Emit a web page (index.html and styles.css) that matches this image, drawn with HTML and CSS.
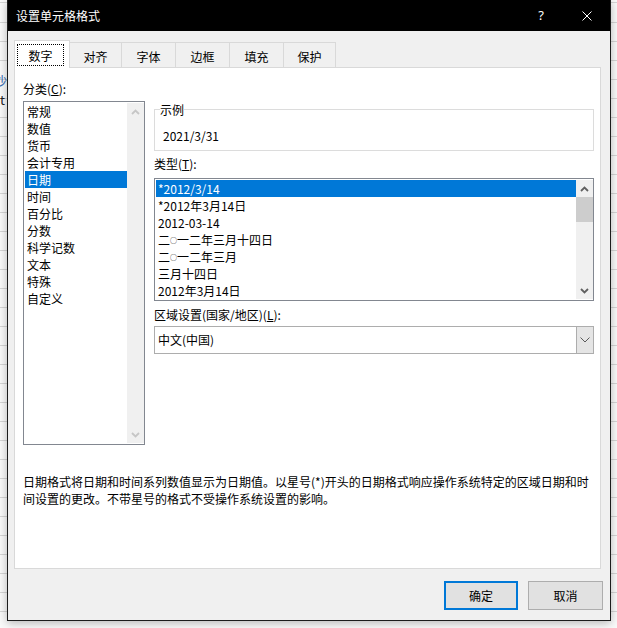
FILE: index.html
```html
<!DOCTYPE html>
<html lang="zh-CN">
<head>
<meta charset="utf-8">
<title>设置单元格格式</title>
<link rel="stylesheet" href="styles.css">
</head>
<body>
<div class="desk">
  <span class="bg-text bg-t1">沙</span>
  <span class="bg-text bg-t2">t</span>
  <div class="dialog">
    <div class="titlebar">
      <span class="title">设置单元格格式</span>
      <span class="tb-btn help">?</span>
      <span class="tb-btn close">
        <svg width="10" height="10" viewBox="0 0 10 10"><path d="M0.5 0.5 L9.5 9.5 M9.5 0.5 L0.5 9.5" stroke="#fff" stroke-width="1" fill="none"/></svg>
      </span>
    </div>
    <div class="body">
      <div class="tabs">
        <div class="tab selected"><span class="focus">数字</span></div>
        <div class="tab w52">对齐</div>
        <div class="tab w54">字体</div>
        <div class="tab w54">边框</div>
        <div class="tab w54">填充</div>
        <div class="tab w52">保护</div>
      </div>
      <div class="panel">
        <div class="cols">
          <div class="left">
            <div class="label lbl-cat">分类(<u>C</u>):</div>
            <div class="listbox catlist">
              <div class="rows">
                <div class="row">常规</div>
                <div class="row">数值</div>
                <div class="row">货币</div>
                <div class="row">会计专用</div>
                <div class="row sel">日期</div>
                <div class="row">时间</div>
                <div class="row">百分比</div>
                <div class="row">分数</div>
                <div class="row">科学记数</div>
                <div class="row">文本</div>
                <div class="row">特殊</div>
                <div class="row">自定义</div>
              </div>
              <div class="sb disabled">
                <div class="sb-arrow"><svg width="9" height="6" viewBox="0 0 9 6"><polyline points="1,5 4.5,1.5 8,5" fill="none" stroke="#c6c6c6" stroke-width="1.8"/></svg></div>
                <div class="sb-track"></div>
                <div class="sb-arrow"><svg width="9" height="6" viewBox="0 0 9 6"><polyline points="1,1 4.5,4.5 8,1" fill="none" stroke="#c6c6c6" stroke-width="1.8"/></svg></div>
              </div>
            </div>
          </div>
          <div class="right">
            <fieldset class="sample">
              <legend>示例</legend>
              <div class="sample-val">2021/3/31</div>
            </fieldset>
            <div class="label lbl-type">类型(<u>T</u>):</div>
            <div class="listbox typelist">
              <div class="rows">
                <div class="row sel">*2012/3/14</div>
                <div class="row">*2012年3月14日</div>
                <div class="row">2012-03-14</div>
                <div class="row">二<span class="circ">○</span>一二年三月十四日</div>
                <div class="row">二<span class="circ">○</span>一二年三月</div>
                <div class="row">三月十四日</div>
                <div class="row">2012年3月14日</div>
              </div>
              <div class="sb">
                <div class="sb-arrow"><svg width="9" height="6" viewBox="0 0 9 6"><polyline points="1,5 4.5,1.5 8,5" fill="none" stroke="#606060" stroke-width="1.8"/></svg></div>
                <div class="sb-track"><div class="sb-thumb"></div></div>
                <div class="sb-arrow"><svg width="9" height="6" viewBox="0 0 9 6"><polyline points="1,1 4.5,4.5 8,1" fill="none" stroke="#606060" stroke-width="1.8"/></svg></div>
              </div>
            </div>
            <div class="label lbl-locale">区域设置(国家/地区)(<u>L</u>):</div>
            <div class="combo">
              <div class="combo-text">中文(中国)</div>
              <div class="combo-btn"><svg width="10" height="6" viewBox="0 0 10 6"><polyline points="0.5,0.5 5,5 9.5,0.5" fill="none" stroke="#5a5a5a" stroke-width="1"/></svg></div>
            </div>
          </div>
        </div>
        <p class="desc">日期格式将日期和时间系列数值显示为日期值。以星号(*)开头的日期格式响应操作系统特定的区域日期和时<br>间设置的更改。不带星号的格式不受操作系统设置的影响。</p>
      </div>
      <div class="buttons">
        <div class="btn ok">确定</div>
        <div class="btn cancel">取消</div>
      </div>
    </div>
  </div>
</div>
</body>
</html>
```
FILE: styles.css
```css
* { box-sizing: border-box; }
html, body { margin: 0; padding: 0; }
body {
  width: 617px;
  height: 628px;
  overflow: hidden;
  font-family: "Noto Sans CJK SC", "Noto Sans", sans-serif;
  font-size: 12px;
  color: #000;
}
.desk {
  position: relative;
  width: 617px;
  height: 628px;
  overflow: hidden;
  background-color: #fafafa;
  background-image: repeating-linear-gradient(to bottom, transparent 0, transparent 18px, #d6d6d6 18px, #d6d6d6 19px);
  background-position: 0 4px;
}
.bg-text { position: absolute; font-size: 13px; line-height: 16px; }
.bg-t1 { left: -6px; top: 72px; color: #3d6fb5; }
.bg-t2 { left: 0; top: 92px; color: #222; }

.dialog {
  position: relative;
  z-index: 1;
  margin-left: 7px;
  width: 604px;
  height: 621px;
  border: 1px solid #1c1c1c;
  border-top: 0;
  background: #f0f0f0;
  display: flex;
  flex-direction: column;
  box-shadow: 0 2px 9px rgba(0, 0, 0, 0.28);
}
.titlebar {
  flex: none;
  height: 31px;
  background: #000;
  color: #fff;
  display: flex;
  align-items: center;
}
.title { flex: 1; padding-left: 8px; line-height: 17px; }
.tb-btn {
  width: 46px;
  height: 31px;
  display: flex;
  align-items: center;
  justify-content: center;
}
.help { font-family: "Noto Sans", sans-serif; font-size: 13px; padding-bottom: 1px; }

.body { flex: 1; display: flex; flex-direction: column; }
.tabs {
  height: 27px;
  margin-top: 9px;
  padding-left: 6px;
  display: flex;
  align-items: flex-end;
}
.tab {
  height: 25px;
  border-top: 1px solid #d9d9d9;
  border-right: 1px solid #d9d9d9;
  background: #f0f0f0;
  display: flex;
  align-items: center;
  justify-content: center;
  padding-top: 2px;
  line-height: 17px;
}
.w52 { width: 52px; }
.w54 { width: 54px; }
.tab.selected {
  position: relative;
  z-index: 2;
  width: 56px;
  height: 28px;
  margin-bottom: -1px;
  border: 1px solid #d9d9d9;
  border-bottom: 0;
  background: #fff;
  padding: 0;
  display: block;
}
.focus {
  display: flex;
  align-items: center;
  justify-content: center;
  width: 47px;
  height: 22px;
  margin: 3px 0 0 2px;
  border: 1px dotted #000;
}

.panel {
  position: relative;
  z-index: 1;
  margin-left: 6px;
  width: 587px;
  height: 502px;
  border: 1px solid #d9d9d9;
  background: #fff;
  padding: 12px 0 0 8px;
}
.cols { display: flex; gap: 9px; align-items: flex-start; }
.left { width: 122px; }
.right { width: 440px; padding-top: 21px; }
.label { height: 17px; line-height: 17px; white-space: nowrap; }
.lbl-cat { margin-bottom: 4px; }
.lbl-type { margin: 4px 0 6px; }
.lbl-locale { margin: 5px 0 3px; }

.listbox {
  border: 1px solid #828790;
  padding: 1px 0 1px 1px;
  display: flex;
  background: #fff;
}
.catlist { height: 344px; }
.typelist { height: 123px; }
.rows { flex: 1; min-width: 0; }
.row {
  height: 17px;
  line-height: 17px;
  padding-left: 2px;
  white-space: nowrap;
}
.row.sel { background: #0078d7; color: #fff; }
.circ {
  font-size: 7px;
  vertical-align: 2px;
  line-height: 0;
}

.sb {
  width: 17px;
  flex: none;
  background: #f0f0f0;
  display: flex;
  flex-direction: column;
}
.sb-arrow {
  height: 17px;
  display: flex;
  align-items: center;
  justify-content: center;
  flex: none;
}
.sb-track { flex: 1; }
.sb-thumb { height: 25px; background: #cdcdcd; }

.sample {
  margin: 0;
  width: 440px;
  height: 50px;
  border: 1px solid #dcdcdc;
  padding: 0 0 0 5px;
  min-width: 0;
}
.sample legend { padding: 0; line-height: 17px; }
.sample-val { margin: 9px 0 0 3px; line-height: 17px; }

.combo {
  height: 28px;
  border: 1px solid #adadad;
  display: flex;
  background: #fff;
}
.combo-text { flex: 1; padding-left: 3px; line-height: 26px; }
.combo-btn {
  width: 17px;
  background: #e5e5e5;
  border-left: 1px solid #adadad;
  display: flex;
  align-items: center;
  justify-content: center;
}

.desc {
  margin: 28px 0 0;
  line-height: 17px;
  white-space: nowrap;
}

.buttons {
  display: flex;
  justify-content: flex-end;
  gap: 10px;
  margin-top: 12px;
  padding-right: 7px;
}
.btn {
  height: 29px;
  display: flex;
  align-items: center;
  justify-content: center;
  background: #e1e1e1;
  border: 1px solid #adadad;
}
.btn.ok { width: 74px; border: 2px solid #0078d7; }
.btn.cancel { width: 75px; }
```
